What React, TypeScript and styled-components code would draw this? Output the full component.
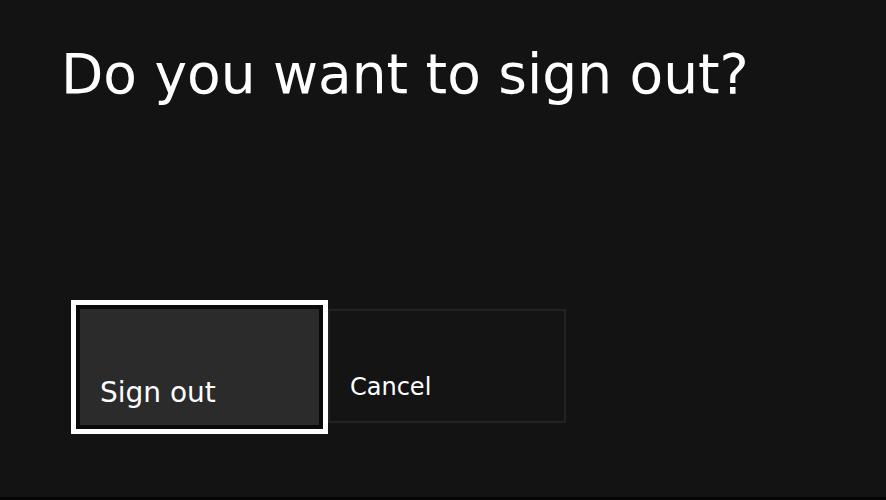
import React from 'react';
import styled, { createGlobalStyle } from 'styled-components';

const GlobalStyle = createGlobalStyle`
  html, body {
    margin: 0;
    padding: 0;
    background: #131313;
  }
  body {
    font-family: "DejaVu Sans", "Liberation Sans", sans-serif;
    color: #ffffff;
  }
`;

const Screen = styled.div`
  box-sizing: border-box;
  width: 886px;
  height: 500px;
  padding: 42px 0 0 61px;
  background: #131313;
  border-bottom: 3px solid #050505;
  overflow: hidden;
`;

const Title = styled.h1`
  margin: 0;
  font-size: 55px;
  line-height: 64px;
  font-weight: normal;
  color: #ffffff;
`;

const ButtonRow = styled.div`
  display: flex;
  gap: 9px;
  margin: 203px 0 0 19px;
`;

const Button = styled.button<{ focused?: boolean }>`
  box-sizing: border-box;
  width: ${p => (p.focused ? '239px' : '238px')};
  height: ${p => (p.focused ? '116px' : '114px')};
  display: flex;
  align-items: flex-end;
  padding: ${p => (p.focused ? '0 0 16px 20px' : '0 0 20px 20px')};
  margin: 0;
  font-family: "DejaVu Sans", "Liberation Sans", sans-serif;
  font-size: ${p => (p.focused ? '28px' : '24px')};
  line-height: ${p => (p.focused ? '32px' : '28px')};
  color: #ffffff;
  text-align: left;
  background: ${p => (p.focused ? '#2b2b2b' : '#141414')};
  border: ${p => (p.focused ? 'none' : '2px solid #232323')};
  box-shadow: ${p => (p.focused ? '0 0 0 4px #0a0a0a, 0 0 0 9px #ffffff' : 'none')};
  cursor: pointer;
`;

export default function App() {
  return (
    <>
      <GlobalStyle />
      <Screen>
        <Title>Do you want to sign out?</Title>
        <ButtonRow>
          <Button focused>Sign out</Button>
          <Button>Cancel</Button>
        </ButtonRow>
      </Screen>
    </>
  );
}
